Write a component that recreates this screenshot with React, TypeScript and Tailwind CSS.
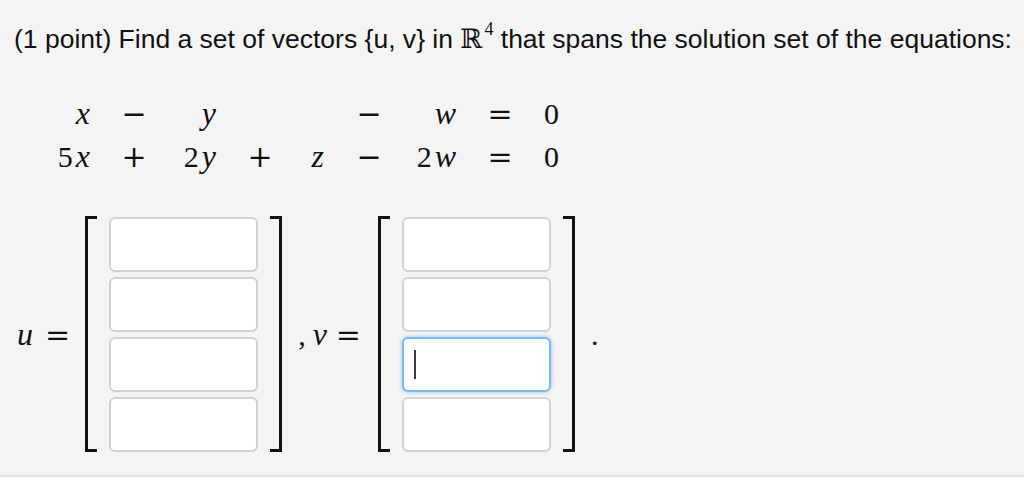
import React from 'react'

const mathFont = { fontFamily: '"Liberation Serif", "DejaVu Serif", serif' }
const opFont = { fontFamily: '"DejaVu Serif", "Liberation Serif", serif' }

function V({ children }: { children: React.ReactNode }) {
  return <i className="italic text-[32px]">{children}</i>
}

function Cell({ children, align = 'end' }: { children?: React.ReactNode; align?: 'end' | 'center' | 'start' }) {
  const cls =
    align === 'end' ? 'justify-end' : align === 'center' ? 'justify-center' : 'justify-start'
  return <div className={`flex ${cls} items-baseline whitespace-nowrap`}>{children}</div>
}

function Op({ children }: { children: React.ReactNode }) {
  return (
    <Cell align="center">
      <span style={opFont} className="font-light">
        {children}
      </span>
    </Cell>
  )
}

function Box({ focused = false }: { focused?: boolean }) {
  return (
    <div
      className={`relative h-[55px] w-[149px] rounded-[6px] bg-white border-2 ${
        focused
          ? 'border-[#7cb9ef] shadow-[0_0_4px_rgba(102,175,233,0.7)]'
          : 'border-[#d2d2d2]'
      }`}
    >
      <input className="h-full w-full bg-transparent px-3 outline-none" aria-label="entry" />
      {focused && <span className="absolute left-[10px] top-[11px] h-[29px] w-[2px] bg-[#3a3a3a]" />}
    </div>
  )
}

function Bracket({ side }: { side: 'left' | 'right' }) {
  return (
    <div
      className={`h-[236px] w-[12px] border-y-[3px] border-[#111] ${
        side === 'left' ? 'border-l-[3px]' : 'border-r-[3px]'
      }`}
    />
  )
}

function Column({ focusIndex }: { focusIndex?: number }) {
  return (
    <div className="flex flex-col gap-[5px]">
      {[0, 1, 2, 3].map((i) => (
        <Box key={i} focused={i === focusIndex} />
      ))}
    </div>
  )
}

export default function App() {
  return (
    <div className="bg-white pb-[12px]">
      <div className="bg-[#f4f4f4] border-b-2 border-[#e2e2e2] pt-[20px] pb-[23px] text-[#111]">
        <p
          className="pl-[14px] text-[26.5px] leading-[31px]"
          style={{ fontFamily: '"Liberation Sans", Arial, sans-serif' }}
        >
          (1 point) Find a set of vectors {'{'}u, v{'}'} in{' '}
          <span style={{ fontFamily: '"DejaVu Serif", serif' }}>ℝ</span>
          <span className="ml-[2px] text-[18px] align-[13px] leading-none" style={mathFont}>
            4
          </span>{' '}
          that spans the solution set of the equations:
        </p>

        <div
          className="mt-[37px] grid grid-cols-[90px_88px_38px_88px_20px_90px_42px_88px_40px] text-[30px] leading-[43px]"
          style={mathFont}
        >
          <Cell>
            <V>x</V>
          </Cell>
          <Op>−</Op>
          <Cell>
            <V>y</V>
          </Cell>
          <Cell />
          <Cell />
          <Op>−</Op>
          <Cell>
            <V>w</V>
          </Cell>
          <Op>=</Op>
          <Cell align="start">0</Cell>

          <Cell>
            5<span className="ml-[3px]"><V>x</V></span>
          </Cell>
          <Op>+</Op>
          <Cell>
            2<span className="ml-[3px]"><V>y</V></span>
          </Cell>
          <Op>+</Op>
          <Cell>
            <V>z</V>
          </Cell>
          <Op>−</Op>
          <Cell>
            2<span className="ml-[3px]"><V>w</V></span>
          </Cell>
          <Op>=</Op>
          <Cell align="start">0</Cell>
        </div>

        <div className="mt-[38px] flex items-center pl-[17px] text-[30px]" style={mathFont}>
          <V>u</V>
          <span style={opFont} className="ml-[12px] font-light">=</span>
          <div className="ml-[15px] flex items-center">
            <Bracket side="left" />
            <div className="mx-[12px]">
              <Column />
            </div>
            <Bracket side="right" />
          </div>
          <span className="ml-[16px]">,</span>
          <span className="ml-[7px]">
            <V>v</V>
          </span>
          <span style={opFont} className="ml-[9px] font-light">=</span>
          <div className="ml-[17px] flex items-center">
            <Bracket side="left" />
            <div className="mx-[12px]">
              <Column focusIndex={2} />
            </div>
            <Bracket side="right" />
          </div>
          <span className="ml-[16px]">.</span>
        </div>
      </div>
    </div>
  )
}
